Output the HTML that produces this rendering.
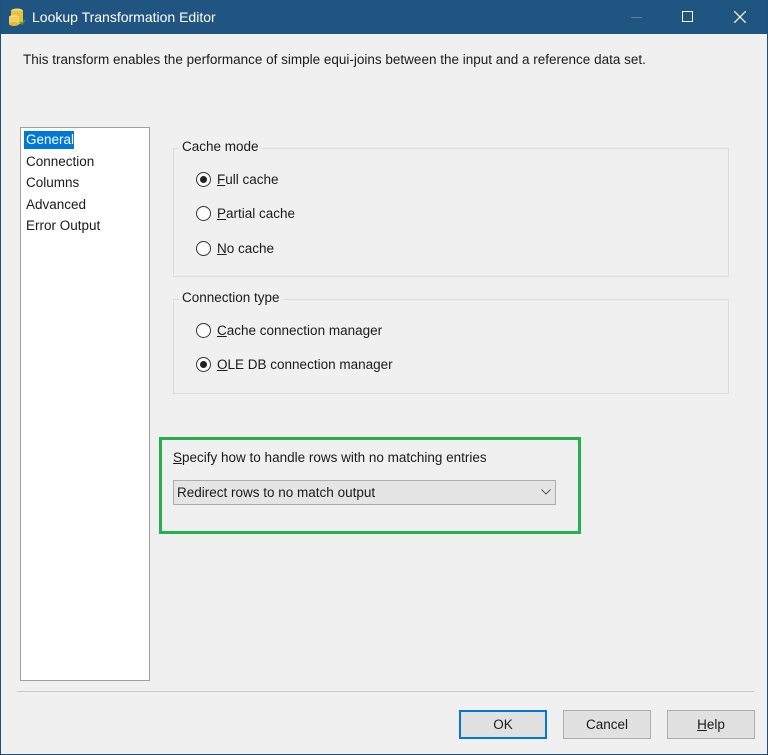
<!DOCTYPE html>
<html><head><meta charset="utf-8"><style>
*{margin:0;padding:0;box-sizing:border-box}
body{width:768px;height:755px;background:#f0f0f0;font-family:"Liberation Sans",sans-serif;font-size:13.5px;color:#1a1a1a;position:relative;overflow:hidden}
.a{position:absolute}
#win{position:absolute;left:0;top:0;width:768px;height:755px;border:1px solid #1f4e79;border-top:none}
#title{position:absolute;left:0;top:0;width:768px;height:34px;background:#215581;color:#fff;font-size:14px}
.grp{position:absolute;border:1px solid #dcdcdc}
.lab{position:absolute;background:#f0f0f0;padding:0 3px;top:-10px;left:5px}
.rad{position:absolute;width:15px;height:15px;border-radius:50%;border:1px solid #333;background:#fff}
.rad.on::after{content:"";position:absolute;left:3px;top:3px;width:7px;height:7px;border-radius:50%;background:#222}
.rt{position:absolute}
u{text-decoration:underline}
.btn{position:absolute;top:710px;height:29px;background:#e1e1e1;border:1px solid #adadad;text-align:center;line-height:27px}
</style></head><body>
<div id="title">
 <svg class="a" style="left:8px;top:7px" width="18" height="20" viewBox="0 0 18 20"><ellipse cx="9" cy="4" rx="6" ry="2.5" fill="#f5d76e"/><rect x="3" y="4" width="12" height="11" fill="#e8c040"/><ellipse cx="9" cy="15" rx="6" ry="2.5" fill="#e8c040"/><ellipse cx="6" cy="10" rx="5" ry="2" fill="#f6dc7a"/><rect x="1" y="10" width="10" height="7" fill="#f2d060"/><ellipse cx="6" cy="17" rx="5" ry="2" fill="#e0b838"/><path d="M12 15l2 2 3-4" stroke="#3a9a3a" stroke-width="1.6" fill="none"/></svg>
 <div class="a" style="left:32px;top:9px">Lookup Transformation Editor</div>
 <div class="a" style="left:631px;top:17px;width:11px;height:1px;background:#5d7f9e"></div>
 <div class="a" style="left:682px;top:11px;width:11px;height:11px;border:1px solid #fff"></div>
 <svg class="a" style="left:734px;top:11px" width="12" height="12"><path d="M0 0L12 12M12 0L0 12" stroke="#fff" stroke-width="1.2"/></svg>
</div>
<div id="win"></div>
<div class="a" style="left:23px;top:52px">This transform enables the performance of simple equi-joins between the input and a reference data set.</div>
<div class="a" style="left:20px;top:127px;width:130px;height:554px;background:#fff;border:1px solid #a0a0a0"></div>
<div class="a" style="left:24px;top:131px;width:50px;height:18px;background:#0078d7"></div>
<div class="a" style="left:26px;top:132px;color:#fff">General</div>
<div class="a" style="left:26px;top:154px">Connection</div>
<div class="a" style="left:26px;top:175px">Columns</div>
<div class="a" style="left:26px;top:197px">Advanced</div>
<div class="a" style="left:26px;top:218px">Error Output</div>

<div class="grp" style="left:173px;top:148px;width:556px;height:129px"><span class="lab">Cache mode</span></div>
<div class="rad on" style="left:196px;top:172px"></div><div class="rt" style="left:217px;top:172px"><u>F</u>ull cache</div>
<div class="rad" style="left:196px;top:206px"></div><div class="rt" style="left:217px;top:206px"><u>P</u>artial cache</div>
<div class="rad" style="left:196px;top:241px"></div><div class="rt" style="left:217px;top:241px"><u>N</u>o cache</div>

<div class="grp" style="left:173px;top:299px;width:556px;height:95px"><span class="lab">Connection type</span></div>
<div class="rad" style="left:196px;top:323px"></div><div class="rt" style="left:217px;top:323px"><u>C</u>ache connection manager</div>
<div class="rad on" style="left:196px;top:357px"></div><div class="rt" style="left:217px;top:357px"><u>O</u>LE DB connection manager</div>

<div class="a" style="left:159px;top:437px;width:422px;height:97px;border:3px solid #22b14c"></div>
<div class="a" style="left:173px;top:450px"><u>S</u>pecify how to handle rows with no matching entries</div>
<div class="a" style="left:173px;top:480px;width:383px;height:25px;background:#e5e5e5;border:1px solid #adadad"></div>
<div class="a" style="left:177px;top:485px">Redirect rows to no match output</div>
<svg class="a" style="left:541px;top:489px" width="10" height="6"><path d="M0.5 0.5L5 5L9.5 0.5" stroke="#555" fill="none"/></svg>

<div class="a" style="left:17px;top:691px;width:737px;height:1px;background:#c8c8c8"></div>
<div class="btn" style="left:459px;width:88px;border:2px solid #0078d7;line-height:25px">OK</div>
<div class="btn" style="left:563px;width:88px">Cancel</div>
<div class="btn" style="left:667px;width:88px"><u>H</u>elp</div>
</body></html>
